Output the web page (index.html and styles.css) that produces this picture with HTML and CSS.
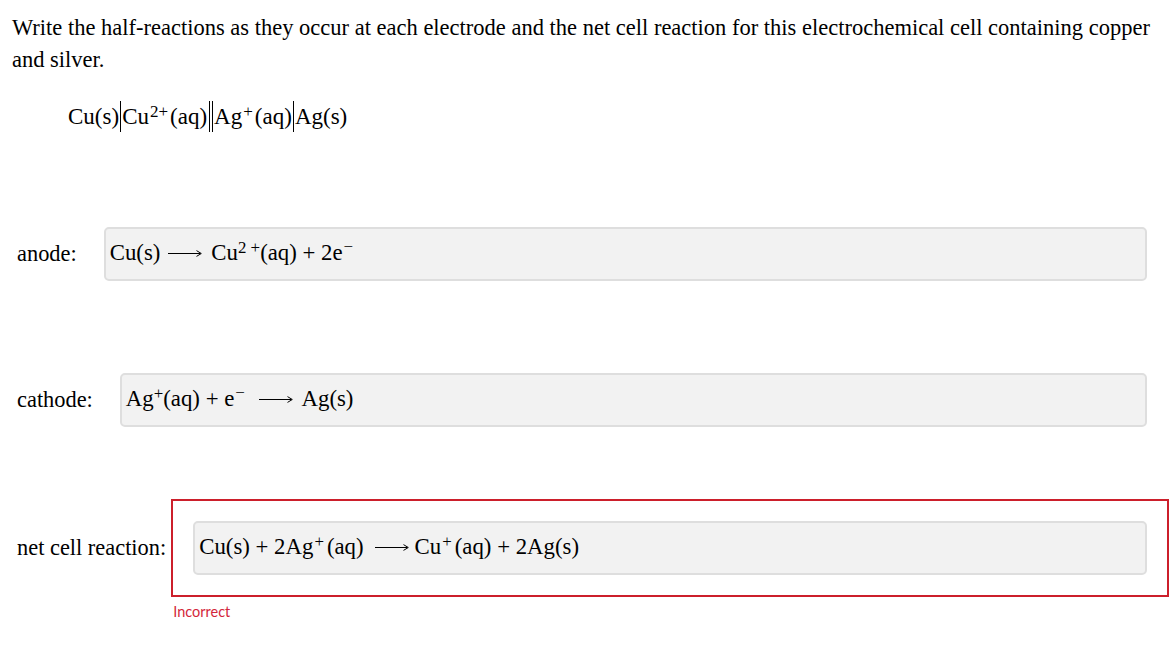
FILE: index.html
```html
<!DOCTYPE html>
<html>
<head>
<meta charset="utf-8">
<link rel="stylesheet" href="styles.css">
</head>
<body>
<div class="page">
  <p class="question">Write the half-reactions as they occur at each electrode and the net cell reaction for this electrochemical cell containing copper and silver.</p>
  <div class="cell">Cu(s)<span class="bar"></span>Cu<sup>2+</sup>(aq)<span class="bar dbl"></span>Ag<sup>+</sup>(aq)<span class="bar"></span>Ag(s)</div>

  <div class="row row-anode">
    <div class="label">anode:</div>
    <div class="field">
      <div class="answer">Cu(s)<span class="arrow"><svg width="34" height="10" viewBox="0 0 34 10"><path d="M0 5.5H32.5" stroke="#000" stroke-width="1.1" fill="none"/><path d="M28.5 2.6L33.3 5.5L28.5 8.4" stroke="#000" stroke-width="1" fill="none"/></svg></span>Cu<sup>2 +</sup>(aq) + 2e<sup class="minus">−</sup></div>
    </div>
  </div>

  <div class="row row-cathode">
    <div class="label">cathode:</div>
    <div class="field">
      <div class="answer">Ag<sup>+</sup>(aq) + e<sup class="minus">−</sup> <span class="arrow"><svg width="34" height="10" viewBox="0 0 34 10"><path d="M0 5.5H32.5" stroke="#000" stroke-width="1.1" fill="none"/><path d="M28.5 2.6L33.3 5.5L28.5 8.4" stroke="#000" stroke-width="1" fill="none"/></svg></span>Ag(s)</div>
    </div>
  </div>

  <div class="row row-net">
    <div class="label">net cell reaction:</div>
    <div class="field">
      <div class="wrong">
        <div class="answer net">Cu(s) + 2Ag<sup>+</sup>(aq)<span class="arrow"><svg width="34" height="10" viewBox="0 0 34 10"><path d="M0 5.5H32.5" stroke="#000" stroke-width="1.1" fill="none"/><path d="M28.5 2.6L33.3 5.5L28.5 8.4" stroke="#000" stroke-width="1" fill="none"/></svg></span>Cu<sup>+</sup>(aq) + 2Ag(s)</div>
      </div>
      <div class="feedback">Incorrect</div>
    </div>
  </div>
</div>
</body>
</html>
```

FILE: styles.css
```css
html, body {
  margin: 0;
  padding: 0;
  background: #fff;
}
.page {
  padding: 12px 28px 0 12px;
  font-family: "Liberation Serif", "Times New Roman", serif;
  color: #000;
}
.question {
  margin: 0 -24px 0 0;
  font-size: 22.5px;
  line-height: 32px;
}
.cell {
  margin: 25px 0 0 56px;
  font-size: 23px;
  line-height: 32px;
  height: 32px;
  white-space: nowrap;
}
.cell sup, .answer sup {
  font-size: 0.74em;
  line-height: 0;
  vertical-align: 0;
  position: relative;
  top: -0.42em;
}
.cell sup {
  margin: 0 2px 0 1px;
}
.answer sup.minus {
  top: -0.5em;
  margin-left: 1px;
}
.answer.net sup {
  margin: 0 3px 0 1px;
}
.bar {
  display: inline-block;
  width: 0;
  height: 31px;
  border-left: 1.4px solid #000;
  vertical-align: -8px;
  margin: 0 1px 0 1px;
}
.bar.dbl {
  width: 2px;
  border-right: 1.4px solid #000;
  margin: 0 1px 0 2px;
}
.row {
  display: flex;
  align-items: center;
  gap: 27px;
  padding-left: 5px;
}
.row-anode { margin-top: 94px; }
.row-cathode { margin-top: 92px; }
.row-net { margin-top: 94px; align-items: flex-start; }
.label {
  font-size: 22.4px;
  line-height: 54px;
  white-space: nowrap;
}
.field {
  flex: 1;
  min-width: 0;
}
.answer {
  height: 54px;
  box-sizing: border-box;
  background: #f2f2f2;
  border: 2px solid #dedede;
  border-radius: 5px;
  padding: 0 4px;
  font-size: 22.8px;
  line-height: 48px;
  white-space: pre;
}
.arrow {
  display: inline-block;
  margin: 0 9px 0 8px;
  line-height: 0;
  vertical-align: 2px;
}
.answer.net .arrow {
  margin: 0 6px 0 11px;
}
.wrong {
  margin: -22px;
  padding: 20px;
  border: 2px solid #cc1f2b;
}
.feedback {
  margin: 28px 0 0 -20px;
  font-family: Lato, "Open Sans", sans-serif;
  font-size: 14.5px;
  color: #d3263a;
}
```
